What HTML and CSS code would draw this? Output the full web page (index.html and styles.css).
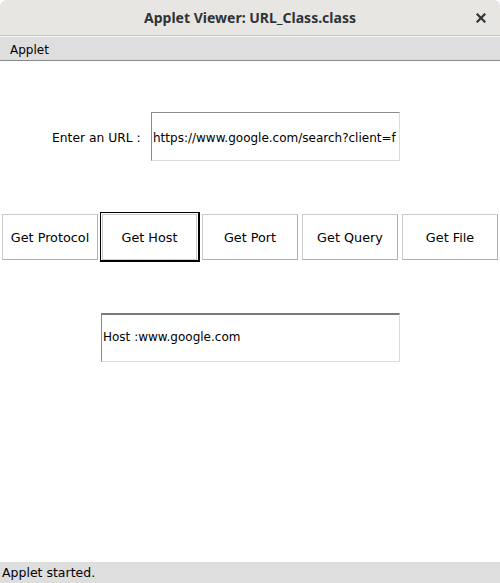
FILE: index.html
```html
<!DOCTYPE html>
<html>
<head>
<meta charset="utf-8">
<link rel="stylesheet" href="styles.css">
</head>
<body>
<div class="window">
  <header class="titlebar">
    <span class="title">Applet Viewer: URL_Class.class</span>
    <span class="close">
      <svg width="10" height="10" viewBox="0 0 10 10"><path d="M1.5 1.5L8.5 8.5M8.5 1.5L1.5 8.5" stroke="#2e3436" stroke-width="2.2" stroke-linecap="square"/></svg>
    </span>
  </header>
  <nav class="menubar"><span class="menu">Applet</span></nav>
  <main class="applet">
    <div class="url-row">
      <label class="label">Enter an URL :</label>
      <div class="field url-field">https://www.google.com/search?client=f</div>
    </div>
    <div class="buttons">
      <div class="slot"><div class="btn">Get Protocol</div></div>
      <div class="slot focused"><div class="btn">Get Host</div></div>
      <div class="slot"><div class="btn">Get Port</div></div>
      <div class="slot"><div class="btn">Get Query</div></div>
      <div class="slot"><div class="btn">Get File</div></div>
    </div>
    <div class="out-row">
      <div class="field out-field">Host :www.google.com</div>
    </div>
  </main>
  <footer class="status">Applet started.</footer>
</div>
</body>
</html>
```
FILE: styles.css
```css
html, body {
  margin: 0;
  padding: 0;
  background: #ffffff;
}
.window {
  width: 500px;
  height: 583px;
  display: flex;
  flex-direction: column;
  font-family: "DejaVu Sans", sans-serif;
  color: #000;
  overflow: hidden;
}
.titlebar {
  height: 36px;
  box-sizing: border-box;
  background: #e8e6e3;
  border-bottom: 1px solid #c5c1bb;
  border-radius: 6px 6px 0 0;
  display: flex;
  align-items: center;
  justify-content: center;
  position: relative;
  flex: none;
}
.title {
  font-family: "Noto Sans", "DejaVu Sans", sans-serif;
  font-weight: bold;
  font-size: 14px;
  color: #2e3436;
}
.close {
  position: absolute;
  right: 14px;
  top: 13px;
  width: 10px;
  height: 10px;
  display: flex;
}
.menubar {
  height: 25px;
  box-sizing: border-box;
  background: #dedede;
  border-top: 1px solid #f4f4f4;
  border-bottom: 1px solid #8a8a8a;
  display: flex;
  align-items: center;
  padding-left: 10px;
  padding-top: 2px;
  flex: none;
}
.menu {
  font-size: 12px;
}
.applet {
  flex: 1;
  display: flex;
  flex-direction: column;
}
.url-row {
  display: flex;
  align-items: center;
  margin-top: 51px;
  padding-left: 52px;
  height: 49px;
}
.label {
  width: 99px;
  font-size: 12.3px;
  padding-top: 2px;
}
.field {
  box-sizing: border-box;
  height: 49px;
  border-top: 1px solid #8c8c8c;
  border-left: 1px solid #8c8c8c;
  border-right: 1px solid #dcdcdc;
  border-bottom: 1px solid #dcdcdc;
  display: flex;
  align-items: center;
  padding-left: 1px;
  white-space: nowrap;
  overflow: hidden;
  font-size: 12px;
}
.url-field {
  width: 249px;
  padding-top: 2px;
}
.buttons {
  display: grid;
  grid-template-columns: repeat(5, 100px);
  margin-top: 51px;
  height: 50px;
  font-size: 12.8px;
}
.slot {
  box-sizing: border-box;
  padding: 2px;
  height: 50px;
}
.btn {
  box-sizing: border-box;
  height: 46px;
  width: 96px;
  border: 1px solid #cccccc;
  border-right-color: #b0b0b0;
  border-bottom-color: #b0b0b0;
  display: flex;
  align-items: center;
  justify-content: center;
  white-space: nowrap;
}
.slot.focused {
  padding: 0;
  border: 1px solid #000;
  border-right-width: 2px;
  border-bottom-width: 2px;
  width: 100px;
}
.slot.focused .btn {
  margin: 1px 0 0 1px;
  width: 95px;
  height: 46px;
  border-color: #cccccc;
}
.out-row {
  margin-top: 51px;
  padding-left: 101px;
}
.out-field {
  width: 299px;
  border-top: 2px solid #7a7a7a;
  padding-left: 1px;
  padding-bottom: 2px;
}
.status {
  margin-top: auto;
  height: 21px;
  box-sizing: border-box;
  background: #dedede;
  font-size: 12.5px;
  padding-left: 2px;
  display: flex;
  align-items: center;
  flex: none;
}
```
